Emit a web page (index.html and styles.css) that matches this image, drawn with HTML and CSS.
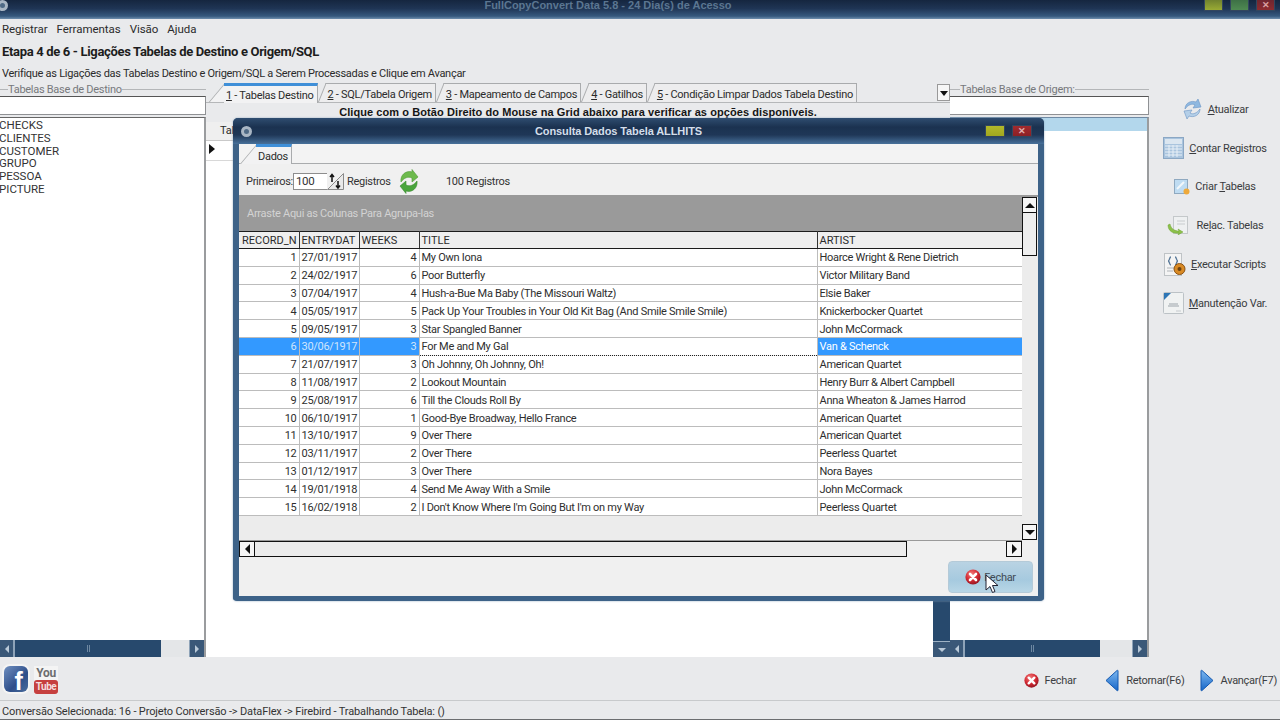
FILE: index.html
```html
<!DOCTYPE html>
<html lang="pt-BR">
<head>
  <meta charset="UTF-8" />
  <title>FullCopyConvert Data 5.8</title>
  <link rel="stylesheet" href="styles.css">
</head>
<body>

  <svg class="defs" width="0" height="0">
    <defs>
      <radialGradient id="redBall" cx="40%" cy="30%" r="75%">
        <stop offset="0" stop-color="#f27a7a"/><stop offset=".55" stop-color="#d42a33"/><stop offset="1" stop-color="#8e1420"/>
      </radialGradient>
      <linearGradient id="blueArrow" x1="0" y1="0" x2="0" y2="1">
        <stop offset="0" stop-color="#7db8f0"/><stop offset="1" stop-color="#1666c8"/>
      </linearGradient>
      <symbol id="closeBall" viewBox="0 0 16 16">
        <circle cx="8" cy="8" r="7.6" fill="url(#redBall)"/>
        <path d="M5 5l6 6M11 5l-6 6" stroke="#fff" stroke-width="2.6" stroke-linecap="round"/>
      </symbol>
      <symbol id="arrowLeft" viewBox="0 0 15 23">
        <path d="M13 1.5L2 11.5l11 10c.6.4 1 .2 1-.5V2c0-.7-.4-.9-1-.5z" fill="url(#blueArrow)" stroke="#1258b0"/>
      </symbol>
      <symbol id="arrowRight" viewBox="0 0 15 23">
        <path d="M2 1.5l11 10-11 10c-.6.4-1 .2-1-.5V2c0-.7.4-.9 1-.5z" fill="url(#blueArrow)" stroke="#1258b0"/>
      </symbol>
    </defs>
  </svg>

  <header class="titlebar">
    <span class="gear dim"></span>
    <span class="titlebar-text">FullCopyConvert Data 5.8 - 24 Dia(s) de Acesso</span>
    <div class="win-btns">
      <span class="win-btn min"></span>
      <span class="win-btn max"></span>
      <span class="win-btn close">✕</span>
    </div>
  </header>

  <nav class="menu">
    <span>Registrar</span>
    <span>Ferramentas</span>
    <span>Visão</span>
    <span>Ajuda</span>
  </nav>

  <h1 class="step-title">Etapa 4 de 6 - Ligações Tabelas de Destino e Origem/SQL</h1>
  <p class="step-sub">Verifique as Ligações das Tabelas Destino e Origem/SQL a Serem Processadas e Clique em Avançar</p>

  <main class="workspace">

    <!-- Tabelas destino -->
    <section class="side-panel">
      <div class="legend"><span>Tabelas Base de Destino</span></div>
      <div class="search"></div>
      <ul class="table-list">
        <li>CHECKS</li>
        <li>CLIENTES</li>
        <li>CUSTOMER</li>
        <li>GRUPO</li>
        <li>PESSOA</li>
        <li>PICTURE</li>
      </ul>
      <div class="dark-scroll">
        <span class="ds-btn"><i class="tri left"></i></span>
        <span class="ds-track"><i></i></span>
        <span class="ds-thumb"></span>
        <span class="ds-btn"><i class="tri right"></i></span>
      </div>
    </section>

    <!-- Abas -->
    <section class="center-panel">
      <div class="tabs">
        <span class="tab active"><u>1</u> - Tabelas Destino</span>
        <span class="tab"><u>2</u> - SQL/Tabela Origem</span>
        <span class="tab"><u>3</u> - Mapeamento de Campos</span>
        <span class="tab"><u>4</u> - Gatilhos</span>
        <span class="tab"><u>5</u> - Condição Limpar Dados Tabela Destino</span>
        <span class="tab-drop"></span>
      </div>
      <p class="hint">Clique com o Botão Direito do Mouse na Grid abaixo para verificar as opções disponíveis.</p>
      <div class="back-grid">
        <div class="back-main">
          <div class="back-head">
            <span class="back-head-gap"></span>
            <span>Tabela</span>
          </div>
          <div class="back-row">
            <span class="back-ind"></span>
          </div>
        </div>
        <div class="back-vscroll">
          <span class="ds-btn down"><i class="tri dn"></i></span>
        </div>
      </div>
    </section>

    <!-- Tabelas origem -->
    <section class="side-panel origin">
      <div class="legend"><span>Tabelas Base de Origem:</span></div>
      <div class="search"></div>
      <div class="table-list">
        <div class="origin-band"></div>
      </div>
      <div class="dark-scroll">
        <span class="ds-btn"><i class="tri left"></i></span>
        <span class="ds-track"><i></i></span>
        <span class="ds-thumb"></span>
        <span class="ds-btn"><i class="tri right"></i></span>
      </div>
    </section>

    <!-- Botoes laterais -->
    <aside class="actions">
      <div class="action">
        <svg class="action-icon" width="21" height="22" viewBox="0 0 21 22">
          <path d="M3 11C3 5 9 2 14 4l2-3 3 8-8 1 2-3C10 5 6 7 3 11z" fill="#8fb8e0" stroke="#6a94c4" stroke-width=".6"/>
          <path d="M18 11c0 6-6 9-11 7l-2 3-3-8 8-1-2 3c3 2 7 0 10-4z" fill="#b4cfe8" stroke="#6a94c4" stroke-width=".6"/>
        </svg>
        <span><u>A</u>tualizar</span>
      </div>
      <div class="action">
        <svg class="action-icon" width="21" height="22" viewBox="0 0 21 22">
          <rect x=".5" y=".5" width="20" height="21" fill="#a9c4de" stroke="#8ba7c4"/>
          <rect x="2" y="2" width="17" height="5" fill="#dbe6f0"/>
          <path d="M2 9h17M2 12h17M2 15h17M2 18h17M6 8v12M10 8v12M14 8v12" stroke="#e8f0f7" stroke-width="1"/>
        </svg>
        <span><u>C</u>ontar Registros</span>
      </div>
      <div class="action">
        <svg class="action-icon" width="16" height="16" viewBox="0 0 16 16">
          <rect x=".5" y=".5" width="13" height="14" fill="#bfdcf2" stroke="#8fa9c0"/>
          <path d="M3 10l7-7" stroke="#f2f7fb" stroke-width="2"/>
          <circle cx="12.5" cy="12.5" r="3" fill="#eea93a"/>
        </svg>
        <span>Criar <u>T</u>abelas</span>
      </div>
      <div class="action">
        <svg class="action-icon spaced" width="21" height="19" viewBox="0 0 21 19">
          <rect x="6.5" y=".5" width="14" height="17" fill="#eef0f1" stroke="#c4c8ca"/>
          <path d="M10 5h8M10 8h8" stroke="#c8ccce"/>
          <path d="M1 9c0 6 5 9 11 8l-1 2 5-3-5-3 1 2C8 15 4 13 3 8z" fill="#8cc04a" stroke="#6fa532" stroke-width=".5"/>
        </svg>
        <span>Re<u>l</u>ac. Tabelas</span>
      </div>
      <div class="action">
        <svg class="action-icon" width="22" height="23" viewBox="0 0 22 23">
          <rect x=".5" y=".5" width="17" height="22" fill="#f4f4f4" stroke="#bfc3c6"/>
          <path d="M7 4C5 4 6 8 4 8c2 0 1 4 3 4M11 4c2 0 1 4 3 4-2 0-1 4-3 4" fill="none" stroke="#5a7a9a" stroke-width="1.3"/>
          <path d="M3 15h8M3 18h6" stroke="#b0b4b8"/>
          <circle cx="15.5" cy="16" r="5.5" fill="#d98a24" stroke="#8a5214"/>
          <circle cx="15.5" cy="16" r="2" fill="#6d4210"/>
        </svg>
        <span><u>E</u>xecutar Scripts</span>
      </div>
      <div class="action">
        <svg class="action-icon" width="21" height="22" viewBox="0 0 21 22">
          <rect x=".5" y=".5" width="20" height="21" rx="1" fill="#f0f2f2" stroke="#bcc2c6"/>
          <path d="M1 8V1h7z" fill="#2d75b5"/>
          <path d="M6 12h9M5 14h11" stroke="#b8bec2" stroke-width="1.4"/>
          <path d="M13 19h5" stroke="#c6cace"/>
        </svg>
        <span><u>M</u>anutenção Var.</span>
      </div>
    </aside>
  </main>

  <footer class="footer">
    <div class="social">
      <span class="fb">f</span>
      <span class="yt"><b>You</b><em>Tube</em></span>
    </div>
    <div class="nav-btns">
      <span class="nav-btn close-btn"><svg width="15" height="15"><use href="#closeBall"/></svg>Fechar</span>
      <span class="nav-btn back-btn"><svg width="15" height="23"><use href="#arrowLeft"/></svg>Retornar(F6)</span>
      <span class="nav-btn next-btn"><svg width="15" height="23"><use href="#arrowRight"/></svg>Avançar(F7)</span>
    </div>
  </footer>

  <div class="statusbar">Conversão Selecionada: 16 - Projeto Conversão -&gt; DataFlex -&gt; Firebird - Trabalhando Tabela: ()</div>

  <!-- Janela Consulta Dados -->
  <div class="modal">
    <div class="modal-title">
      <span class="gear"></span>
      <span class="modal-title-text">Consulta Dados Tabela ALLHITS</span>
      <span class="win-btn min"></span>
      <span class="win-btn close">✕</span>
    </div>

    <div class="modal-tabs">
      <span class="tab active">Dados</span>
    </div>

    <div class="modal-tools">
      <label>Primeiros:</label>
      <span class="num-input">100</span>
      <span class="spin">
        <svg width="17" height="17" viewBox="0 0 17 17">
          <path d="M.5 16.5L16.5.5v16z" fill="#e9e9e9" stroke="#8a8a8a"/>
          <path d="M5 9V2M3 4l2-2.5L7 4" fill="none" stroke="#111" stroke-width="1.5"/>
          <path d="M11 8v7M9 12.5l2 2.5 2-2.5" fill="none" stroke="#111" stroke-width="1.5"/>
        </svg>
      </span>
      <span class="reg-label">Registros</span>
      <svg class="refresh" width="20" height="25" viewBox="0 0 20 25">
        <path d="M2 13C1 6 7 1 13 3V.5L19 8l-6 5V9C9 7 5 9 2 13z" fill="#6dba4c" stroke="#4f9a38" stroke-width=".6"/>
        <path d="M18 12c1 7-5 12-11 10v2.5L1 17l6-5v4c4 2 8 0 11-4z" fill="#4aa53c" stroke="#3a8a30" stroke-width=".6"/>
      </svg>
      <span class="reg-count">100 Registros</span>
    </div>

    <div class="grid-area">
      <div class="grid-main">
        <div class="group-band">Arraste Aqui as Colunas Para Agrupa-las</div>
        <table class="data-grid">
          <colgroup>
            <col class="c-rec"><col class="c-date"><col class="c-weeks"><col class="c-title"><col class="c-artist">
          </colgroup>
          <thead>
            <tr><th>RECORD_N</th><th>ENTRYDAT</th><th>WEEKS</th><th>TITLE</th><th>ARTIST</th></tr>
          </thead>
          <tbody>
            <tr><td class="num">1</td><td>27/01/1917</td><td class="num">4</td><td>My Own Iona</td><td>Hoarce Wright &amp; Rene Dietrich</td></tr>
            <tr><td class="num">2</td><td>24/02/1917</td><td class="num">6</td><td>Poor Butterfly</td><td>Victor Military Band</td></tr>
            <tr><td class="num">3</td><td>07/04/1917</td><td class="num">4</td><td>Hush-a-Bue Ma Baby (The Missouri Waltz)</td><td>Elsie Baker</td></tr>
            <tr><td class="num">4</td><td>05/05/1917</td><td class="num">5</td><td>Pack Up Your Troubles in Your Old Kit Bag (And Smile Smile Smile)</td><td>Knickerbocker Quartet</td></tr>
            <tr><td class="num">5</td><td>09/05/1917</td><td class="num">3</td><td>Star Spangled Banner</td><td>John McCormack</td></tr>
            <tr class="selected"><td class="num">6</td><td>30/06/1917</td><td class="num">3</td><td class="focus">For Me and My Gal</td><td>Van &amp; Schenck</td></tr>
            <tr><td class="num">7</td><td>21/07/1917</td><td class="num">3</td><td>Oh Johnny, Oh Johnny, Oh!</td><td>American Quartet</td></tr>
            <tr><td class="num">8</td><td>11/08/1917</td><td class="num">2</td><td>Lookout Mountain</td><td>Henry Burr &amp; Albert Campbell</td></tr>
            <tr><td class="num">9</td><td>25/08/1917</td><td class="num">6</td><td>Till the Clouds Roll By</td><td>Anna Wheaton &amp; James Harrod</td></tr>
            <tr><td class="num">10</td><td>06/10/1917</td><td class="num">1</td><td>Good-Bye Broadway, Hello France</td><td>American Quartet</td></tr>
            <tr><td class="num">11</td><td>13/10/1917</td><td class="num">9</td><td>Over There</td><td>American Quartet</td></tr>
            <tr><td class="num">12</td><td>03/11/1917</td><td class="num">2</td><td>Over There</td><td>Peerless Quartet</td></tr>
            <tr><td class="num">13</td><td>01/12/1917</td><td class="num">3</td><td>Over There</td><td>Nora Bayes</td></tr>
            <tr><td class="num">14</td><td>19/01/1918</td><td class="num">4</td><td>Send Me Away With a Smile</td><td>John McCormack</td></tr>
            <tr><td class="num">15</td><td>16/02/1918</td><td class="num">2</td><td>I Don't Know Where I'm Going But I'm on my Way</td><td>Peerless Quartet</td></tr>
          </tbody>
        </table>
      </div>
      <div class="vscroll">
        <span class="sb-btn"><i class="tri up"></i></span>
        <span class="sb-thumb"></span>
        <span class="sb-rest"></span>
        <span class="sb-btn"><i class="tri dn"></i></span>
      </div>
    </div>

    <div class="hscroll">
      <span class="sb-btn"><i class="tri left"></i></span>
      <span class="hs-thumb"></span>
      <span class="hs-rest"></span>
      <span class="sb-btn"><i class="tri right"></i></span>
    </div>

    <div class="modal-foot">
      <span class="fechar">
        <svg width="16" height="16"><use href="#closeBall"/></svg>
        <span>Fechar</span>
        <svg class="cursor" width="14" height="20" viewBox="0 0 14 20">
          <path d="M1 1v15l4-3.5 2.5 6 2.5-1-2.5-6H13z" fill="#fff" stroke="#223" stroke-width="1"/>
        </svg>
      </span>
    </div>
  </div>

</body>
</html>
```

FILE: styles.css
```css
* {
  box-sizing: border-box;
}

html, body {
  margin: 0;
  height: 720px;
  overflow: hidden;
}

body {
  position: relative;
  display: flex;
  flex-direction: column;
  font-family: Roboto, "Liberation Sans", Arial, sans-serif;
  font-size: 11px;
  letter-spacing: -.28px;
  color: #2b2b2b;
  background: #e9eaec;
}

.defs {
  position: absolute;
}

ul, p, h1 {
  margin: 0;
  padding: 0;
}

/* small scrollbar arrows */
.tri {
  display: block;
  width: 0;
  height: 0;
  border: 5px solid transparent;
}

.tri.up {
  border-top: 0;
  border-bottom: 5px solid currentColor;
}

.tri.dn {
  border-bottom: 0;
  border-top: 5px solid currentColor;
}

.tri.left {
  border-left: 0;
  border-right: 5px solid currentColor;
}

.tri.right {
  border-right: 0;
  border-left: 5px solid currentColor;
}

/* title bar */
.titlebar {
  position: relative;
  flex: 0 0 19px;
  display: flex;
  align-items: flex-start;
  justify-content: center;
  background: linear-gradient(#15263f 0, #1f3555 45%, #36597e 85%, #6f8fae 100%);
}

.titlebar-text {
  font-family: "Liberation Sans", Arial, sans-serif;
  font-weight: bold;
  font-size: 11px;
  letter-spacing: 0;
  color: #5b7691;
  margin: -1px 64px 0 0;
}

.gear {
  display: inline-block;
  width: 11px;
  height: 11px;
  border-radius: 50%;
  border: 3px solid #a9b6c4;
  background: #4f6a86;
  flex: none;
}

.gear.dim {
  position: absolute;
  left: -3px;
  top: 0;
}

.win-btns {
  position: absolute;
  right: 5px;
  top: -2px;
  display: flex;
  gap: 7px;
}

.win-btn {
  display: flex;
  align-items: center;
  justify-content: center;
  width: 19px;
  height: 13px;
  font-family: "Liberation Sans", Arial, sans-serif;
  font-size: 9px;
  font-weight: bold;
  color: #d9a0a0;
  border: 1px solid #33465e;
}

.win-btn.min {
  background: linear-gradient(#6c7e2e, #9aab34);
}

.win-btn.max {
  background: linear-gradient(#3c6e45, #4f8a52);
}

.win-btn.close {
  background: linear-gradient(#6b2530, #8e2c30);
}

/* menu and headings */
.menu {
  flex: 0 0 21px;
  display: flex;
  align-items: center;
  gap: 9px;
  padding: 0 0 1px 2px;
  font-size: 11.5px;
  letter-spacing: -.05px;
}

.step-title {
  flex: 0 0 24px;
  padding: 3px 0 0 2px;
  font-size: 13px;
  letter-spacing: -.33px;
  line-height: 17px;
  color: #1d1d1d;
}

.step-sub {
  flex: 0 0 18px;
  padding: 3px 0 0 2px;
  line-height: 14px;
}

/* main columns */
.workspace {
  flex: 0 0 575px;
  display: grid;
  grid-template-columns: 206px 744px 199px 131px;
}

.side-panel {
  display: flex;
  flex-direction: column;
}

.legend {
  height: 14px;
  display: flex;
  align-items: center;
  color: #77797c;
}

.legend::before {
  content: "";
  width: 8px;
  border-top: 1px solid #b4b6b8;
}

.legend::after {
  content: "";
  flex: 1;
  border-top: 1px solid #b4b6b8;
}

.origin .legend::before {
  width: 10px;
}

.search {
  height: 19px;
  background: #fff;
  border: 1px solid #8f9194;
  border-top-color: #555;
  border-left: 0;
}

.table-list {
  flex: 1;
  margin-top: 2px;
  list-style: none;
  background: #fff;
  border-top: 1px solid #666;
  border-right: 2px solid #9a9c9e;
  padding-top: 1px;
  font-size: 11.5px;
  line-height: 12.8px;
  color: #333;
  letter-spacing: 0;
  overflow: hidden;
}

.table-list li {
  margin-left: -1px;
}

.origin .table-list {
  padding-top: 0;
  border-top: 1px solid #6f8aa4;
}

.origin-band {
  height: 13px;
  background: #b3d7ec;
}

.dark-scroll {
  flex: 0 0 17px;
  display: flex;
  background: #27496d;
  border-right: 2px solid #9a9c9e;
}

.ds-btn {
  flex: 0 0 15px;
  display: flex;
  align-items: center;
  justify-content: center;
  color: #b9c9d8;
  background: #3a5878;
  border-left: 1px solid #8ea3b8;
}

.ds-btn:first-child {
  border-left: 0;
  border-right: 2px solid #8ea3b8;
}

.ds-btn .tri {
  border-width: 4px;
}

.ds-track {
  flex: 1;
  display: flex;
  align-items: center;
  justify-content: center;
}

.ds-track i {
  width: 3px;
  height: 7px;
  border-left: 1px solid #6e88a2;
  border-right: 1px solid #6e88a2;
}

.ds-thumb {
  flex: 0 0 28px;
  background: #e4e6e8;
}

.origin .ds-thumb {
  flex-basis: 32px;
}

/* center column */
.center-panel {
  display: flex;
  flex-direction: column;
}

.tabs {
  flex: 0 0 21px;
  display: flex;
  align-items: flex-end;
  padding-left: 18px;
  border-bottom: 1px solid #b5b7b9;
  position: relative;
}

.tab {
  position: relative;
  height: 19px;
  margin-right: 8px;
  padding: 3px 3px 0 2px;
  white-space: nowrap;
  background: #ededee;
  border-top: 1px solid #a9abad;
  border-right: 1px solid #a9abad;
  line-height: 15px;
}

.tab::before {
  content: "";
  position: absolute;
  left: -8px;
  top: -1px;
  bottom: 0;
  width: 12px;
  background: #ededee;
  border-left: 1px solid #a9abad;
  border-top: 1px solid #a9abad;
  transform: skewX(-22deg);
  transform-origin: bottom left;
  z-index: -1;
}

.tab.active {
  border-top: 3px solid #3f8fd8;
  padding-top: 2px;
  height: 20px;
  margin-bottom: -1px;
  background: #f2f2f3;
}

.tab.active::before {
  left: -16px;
  width: 20px;
  top: -3px;
  border-top: 0;
  background: #f2f2f3;
  transform: skewX(-40deg);
}

.tab-drop {
  position: absolute;
  right: 0;
  top: 2px;
  width: 13px;
  height: 17px;
  background: #f6f6f6;
  border: 1px solid #999;
}

.tab-drop::after {
  content: "";
  position: absolute;
  left: 2px;
  top: 6px;
  border: 4px solid transparent;
  border-top: 5px solid #111;
  border-bottom: 0;
}

.hint {
  flex: 0 0 16px;
  text-align: center;
  font-family: "Liberation Sans", Arial, sans-serif;
  font-size: 11px;
  font-weight: bold;
  line-height: 19px;
  letter-spacing: .08px;
  color: #151515;
}

.back-grid {
  flex: 1;
  display: flex;
  background: #fff;
}

.back-main {
  flex: 1;
}

.back-head {
  display: flex;
  height: 19px;
  background: #efefef;
  border-bottom: 1px solid #c9c9c9;
  padding-top: 2px;
}

.back-head-gap {
  width: 14px;
}

.back-row {
  height: 17px;
  border-bottom: 1px solid #d8d8d8;
}

.back-ind {
  display: block;
  width: 0;
  margin: 3px 0 0 3px;
  border: 5px solid transparent;
  border-left: 6px solid #111;
}

.back-vscroll {
  flex: 0 0 17px;
  display: flex;
  flex-direction: column;
  justify-content: flex-end;
  background: #27496d;
}

.back-vscroll .down {
  flex: 0 0 16px;
  border: 0;
  border-top: 1px solid #9eb2c4;
}

/* right column */
.actions {
  display: flex;
  flex-direction: column;
  padding: 8px 0 0 1px;
}

.action {
  flex: 0 0 38.8px;
  display: flex;
  align-items: center;
  justify-content: center;
  gap: 5px;
  color: #3a3c40;
  white-space: nowrap;
}

.action-icon.spaced {
  margin-right: 4px;
}

/* footer */
.footer {
  flex: 0 0 44px;
  display: flex;
  justify-content: space-between;
  align-items: center;
  padding-top: 3px;
  border-bottom: 1px solid #c8cacc;
}

.social {
  display: flex;
  gap: 6px;
  padding-left: 4px;
}

.fb {
  width: 24px;
  height: 26px;
  border-radius: 6px;
  background: linear-gradient(135deg, #6f8fc0, #2f4f8a 60%, #4a6c9c);
  color: #fff;
  font: bold 25px/30px "Liberation Sans", Arial, sans-serif;
  text-align: center;
  padding-left: 5px;
  box-shadow: 0 0 0 2px #f4f4f4;
}

.yt {
  width: 24px;
  height: 28px;
  display: flex;
  flex-direction: column;
  align-items: center;
  background: #f4f4f4;
  line-height: 1;
}

.yt b {
  font-size: 12px;
  color: #6d6d70;
  margin-top: 1px;
}

.yt em {
  font-style: normal;
  font-weight: bold;
  font-size: 10px;
  letter-spacing: -.5px;
  line-height: 14px;
  margin-top: 1px;
  padding: 0 2px;
  border-radius: 3px;
  color: #f4dede;
  background: #c6403f;
}

.nav-btns {
  display: flex;
  align-items: center;
  padding: 1px 3px 0 0;
  color: #3c3e42;
}

.nav-btn {
  display: flex;
  align-items: center;
  gap: 5px;
}

.close-btn {
  margin-right: 28px;
}

.back-btn {
  gap: 7px;
  margin-right: 15px;
}

.next-btn {
  gap: 6px;
}

.statusbar {
  flex: 1;
  padding: 4px 0 0 2px;
  letter-spacing: -.15px;
  line-height: 14px;
  border-bottom: 2px solid #6b6d70;
  color: #333;
}

/* modal window */
.modal {
  position: absolute;
  left: 233px;
  top: 118px;
  width: 811px;
  height: 483px;
  display: flex;
  flex-direction: column;
  background: #f0f0f0;
  border: 6px solid #3d6288;
  border-top: 0;
  border-bottom-width: 5px;
  border-radius: 5px 5px 4px 4px;
  box-shadow: 0 0 2px #8aa2ba;
}

.modal-title {
  flex: 0 0 26px;
  margin: 0 -6px;
  padding: 0 12px 0 8px;
  display: flex;
  align-items: center;
  gap: 7px;
  background: linear-gradient(#2f4d70 0, #1b3250 35%, #1f3757 65%, #47709a 100%);
  border-radius: 5px 5px 0 0;
}

.modal-title-text {
  flex: 1;
  text-align: center;
  font-family: "Liberation Sans", Arial, sans-serif;
  color: #d4deea;
  font-weight: bold;
  font-size: 11px;
  letter-spacing: -.1px;
}

.modal-title .win-btn {
  width: 20px;
  height: 12px;
  color: #e0b0b0;
}

.modal-title .win-btn.min {
  background: linear-gradient(#b3b92a, #a1a81f);
}

.modal-title .win-btn.close {
  background: linear-gradient(#a22b2f, #8b2025);
}

.modal-tabs {
  flex: 0 0 20px;
  display: flex;
  align-items: flex-end;
  padding-left: 17px;
  position: relative;
  z-index: 0;
  background: #f3f3f3;
  border-bottom: 1px solid #a9abad;
}

.modal-tools {
  flex: 0 0 31px;
  display: flex;
  align-items: center;
  padding: 3px 0 0 7px;
  color: #333;
}

.modal-tools label {
  flex: 0 0 45px;
}

.num-input {
  width: 34px;
  height: 17px;
  padding-left: 2px;
  font-size: 11.5px;
  line-height: 15px;
  background: #fff;
  border: 1px solid #8d8d8d;
  border-right: 0;
}

.spin {
  display: flex;
  margin-top: 1px;
}

.reg-label {
  flex: 0 0 44px;
  margin-left: 3px;
}

.refresh {
  margin-left: 8px;
}

.reg-count {
  margin-left: 27px;
}

.grid-area {
  flex: 0 0 345px;
  display: flex;
  align-items: flex-start;
  background: linear-gradient(#9a9a9a 2px, #ececec 2px);
}

.grid-main {
  flex: 0 0 783px;
}

.group-band {
  height: 36px;
  padding: 12px 0 0 8px;
  background: #9a9a9a;
  color: #d3d3d3;
}

.data-grid {
  width: 783px;
  table-layout: fixed;
  border-collapse: collapse;
  border-top: 1px solid #1c1c1c;
}

.c-rec, .c-date, .c-weeks {
  width: 60px;
}

.c-title {
  width: 398px;
}

.data-grid th {
  height: 17px;
  padding: 0 0 0 2px;
  text-align: left;
  font-weight: normal;
  letter-spacing: 0;
  overflow: hidden;
  white-space: nowrap;
  background: #efefef;
  border-right: 1px solid #333;
  border-bottom: 1px solid #1c1c1c;
}

.data-grid th:first-child {
  padding-left: 3px;
}

.data-grid th:last-child {
  border-right: 0;
}

.data-grid td {
  height: 17.8px;
  padding: 1px 0 0 2px;
  line-height: 15px;
  overflow: hidden;
  white-space: nowrap;
  background: #fff;
  color: #2e2e2e;
  border-right: 1px solid #bcbcbc;
  border-bottom: 1px solid #bcbcbc;
}

.data-grid td:last-child {
  border-right: 0;
}

.data-grid td.num {
  text-align: right;
  padding: 1px 2px 0 0;
}

.data-grid .selected td {
  background: #3399ff;
  color: #cfe6fd;
}

.data-grid .selected td:last-child {
  color: #fff;
}

.data-grid .selected td.focus {
  background: #fff;
  color: #2e2e2e;
  border-top: 1px dotted #222;
  border-bottom: 1px dotted #222;
}

.vscroll {
  flex: 0 0 15px;
  display: flex;
  flex-direction: column;
  margin-top: 2px;
  height: 343px;
}

.sb-btn {
  display: flex;
  align-items: center;
  justify-content: center;
  flex: 0 0 16px;
  background: #f6f6f6;
  border: 1px solid #111;
  color: #111;
}

.sb-thumb {
  flex: 0 0 43px;
  background: #eee;
  border: 1px solid #111;
  border-top: 0;
}

.sb-rest {
  flex: 1;
}

.hscroll {
  flex: 0 0 17px;
  display: flex;
  width: 783px;
  border-top: 1px solid #9a9a9a;
}

.hs-thumb {
  flex: 0 0 652px;
  background: #ececec;
  border: 1px solid #111;
  border-left: 0;
}

.hs-rest {
  flex: 1;
}

.modal-foot {
  flex: 1;
  display: flex;
  justify-content: flex-end;
  padding: 4px 5px 4px 0;
}

.fechar {
  position: relative;
  width: 85px;
  height: 32px;
  display: flex;
  align-items: center;
  justify-content: center;
  gap: 3px;
  border-radius: 4px;
  color: #3f4a54;
  background: linear-gradient(#b9d3e3, #a6cadf 60%, #b8d6e6);
  border: 1px solid #b4cad8;
}

.cursor {
  position: absolute;
  left: 36px;
  top: 12px;
}
```
